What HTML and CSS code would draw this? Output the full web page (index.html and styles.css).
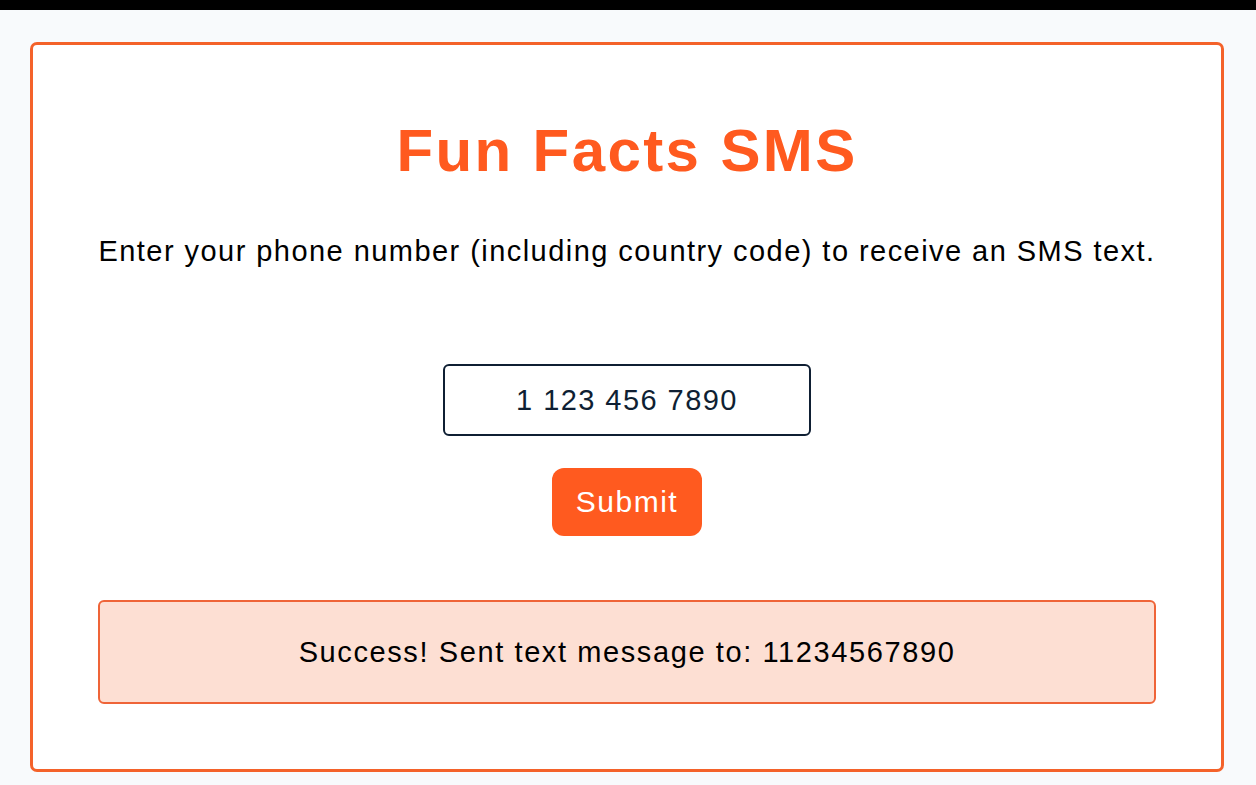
FILE: index.html
```html
<!DOCTYPE html>
<html lang="en">
<head>
    <meta charset="UTF-8">
    <meta name="viewport" content="width=device-width, initial-scale=1.0">
    <title>Fun Facts SMS</title>
    <link rel="stylesheet" href="styles.css">
</head>
<body>
    <div class="top-bar"></div>
    <main class="page">
        <div class="sms-card">
            <h1>Fun Facts SMS</h1>
            <p class="intro">Enter your phone number (including country code) to receive an SMS text.</p>

            <form id="smsForm" class="sms-form">
                <input type="tel" id="phone" class="phone-input" value="1 123 456 7890">
                <button type="submit" class="submit-btn">Submit</button>
            </form>

            <div id="message" class="message success">Success! Sent text message to: 11234567890</div>
        </div>
    </main>
</body>
</html>
```

FILE: styles.css
```css
:root {
    --primary: #ff5a1f;
    --card-border: #f4622a;
    --bg: #f8fafc;
    --text: #000000;
    --input-text: #0f1f33;
    --success-bg: #fddfd3;
    --success-border: #ef6438;
}

body {
    font-family: "Liberation Sans", Arial, Helvetica, sans-serif;
    background-color: var(--bg);
    margin: 0;
    color: var(--text);
}

.top-bar {
    height: 10px;
    background: #000;
}

.page {
    padding: 32px 32px 13px 30px;
}

.sms-card {
    background: #fff;
    border: 3px solid var(--card-border);
    border-radius: 7px;
    padding: 71px 65px 65px;
    text-align: center;
}

h1 {
    margin: 0;
    font-size: 60px;
    font-weight: 700;
    letter-spacing: 0.04em;
    color: var(--primary);
}

.intro {
    margin: 50px 0 0;
    font-size: 29px;
    letter-spacing: 1.45px;
    white-space: nowrap;
}

.sms-form {
    display: flex;
    flex-direction: column;
    align-items: center;
    gap: 32px;
    margin-top: 96px;
}

.phone-input {
    box-sizing: border-box;
    width: 368px;
    height: 72px;
    border: 2px solid var(--input-text);
    border-radius: 6px;
    font-family: inherit;
    font-size: 29px;
    letter-spacing: 1.45px;
    color: var(--input-text);
    text-align: center;
    background: #fff;
    outline: none;
}

.submit-btn {
    width: 150px;
    height: 68px;
    border: none;
    border-radius: 12px;
    background: var(--primary);
    color: #fff;
    font-family: inherit;
    font-size: 30px;
    letter-spacing: 1.5px;
    cursor: pointer;
}

.message {
    box-sizing: border-box;
    margin-top: 64px;
    height: 104px;
    display: flex;
    align-items: center;
    justify-content: center;
    font-size: 29px;
    letter-spacing: 1.6px;
    border-radius: 6px;
}

.success {
    background: var(--success-bg);
    border: 2px solid var(--success-border);
}
```
